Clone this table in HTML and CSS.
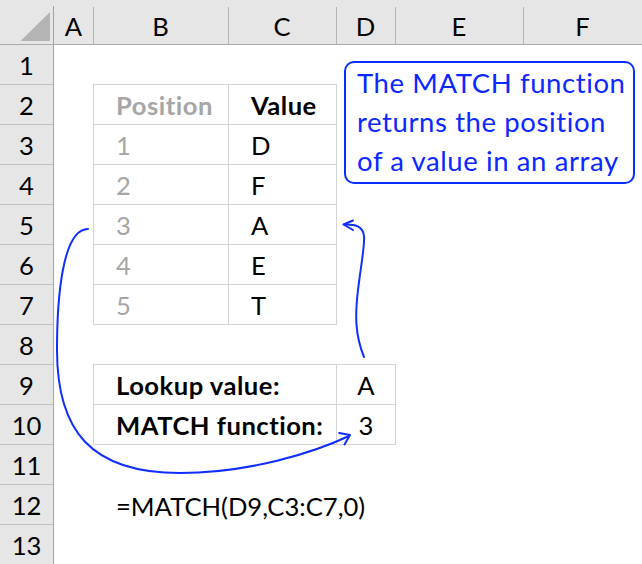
FILE: index.html
```html
<!DOCTYPE html>
<html>
<head>
<meta charset="utf-8">
<link rel="stylesheet" href="styles.css">
</head>
<body>
<div class="sheet">
  <div class="corner">
    <svg class="corner-tri" width="54" height="45" viewBox="0 0 54 45"><polygon points="20.5,41 50,41 50,12" fill="#b4b4b4"/></svg>
  </div>
  <div class="colheads">
    <div class="colhead">A</div>
    <div class="colhead">B</div>
    <div class="colhead">C</div>
    <div class="colhead">D</div>
    <div class="colhead">E</div>
    <div class="colhead">F</div>
  </div>
  <div class="rowheads">
    <div class="rowhead">1</div>
    <div class="rowhead">2</div>
    <div class="rowhead">3</div>
    <div class="rowhead">4</div>
    <div class="rowhead">5</div>
    <div class="rowhead">6</div>
    <div class="rowhead">7</div>
    <div class="rowhead">8</div>
    <div class="rowhead">9</div>
    <div class="rowhead">10</div>
    <div class="rowhead">11</div>
    <div class="rowhead">12</div>
    <div class="rowhead">13</div>
  </div>
  <div class="cells">
    <div class="tbl tbl-pos">
      <div class="cell muted bold">Position</div>
      <div class="cell bold">Value</div>
      <div class="cell muted">1</div>
      <div class="cell">D</div>
      <div class="cell muted">2</div>
      <div class="cell">F</div>
      <div class="cell muted">3</div>
      <div class="cell">A</div>
      <div class="cell muted">4</div>
      <div class="cell">E</div>
      <div class="cell muted">5</div>
      <div class="cell">T</div>
    </div>
    <div class="tbl tbl-lookup">
      <div class="cell bold">Lookup value:</div>
      <div class="cell center">A</div>
      <div class="cell bold">MATCH function:</div>
      <div class="cell center">3</div>
    </div>
    <div class="formula">=MATCH(D9,C3:C7,0)</div>
  </div>
</div>

<div class="callout">The MATCH function<br>returns the position<br>of a value in an array</div>

<svg class="arrows" width="642" height="564" viewBox="0 0 642 564">
  <g fill="none" stroke="#0f2eff" stroke-width="2" stroke-linecap="round" stroke-linejoin="round">
    <path d="M88,229 C62,229 57,300 57,350 C57,430 90,473 180,473 C250,473 315,452 349,436"/>
    <polyline points="339.2,433.1 350,435 344.5,444.5"/>
    <path d="M364,357 C355,335 355,315 358,290 C361,265 365,245 364,236 C363,226 355,224 344,224.5"/>
    <polyline points="353,220.5 343.5,224.5 353,230"/>
  </g>
</svg>
</body>
</html>
```

FILE: styles.css
```css
html, body {
  margin: 0;
  padding: 0;
  background: #ffffff;
  overflow: hidden;
}

body {
  width: 642px;
  height: 564px;
  position: relative;
  font-family: "Lato", "Carlito", "Open Sans", sans-serif;
  font-size: 25.6px;
  color: #000000;
}

.sheet {
  display: grid;
  grid-template-columns: 54px 1fr;
  grid-template-rows: 45px 1fr;
  width: 642px;
  height: 565px;
}

.corner {
  background: linear-gradient(#a3a3a3, #a3a3a3) right bottom / 1px 38px no-repeat, #e6e6e6;
  border-bottom: 1px solid #ababab;
  box-sizing: border-box;
  display: flex;
}

.colheads {
  display: grid;
  grid-template-columns: 39px 135px 108px 59px 128px 1fr;
  background: #e6e6e6;
  border-bottom: 1px solid #ababab;
  box-sizing: border-box;
}

.colhead {
  display: flex;
  align-items: flex-end;
  justify-content: center;
  line-height: 1.2;
  padding-bottom: 2.5px;
  background: linear-gradient(#b4b4b4, #b4b4b4) left bottom / 1px 37px no-repeat, #e6e6e6;
}

.colhead:first-child {
  background: #e6e6e6;
}

.rowheads {
  display: flex;
  flex-direction: column;
  background: #e6e6e6;
  border-right: 1px solid #a3a3a3;
  box-sizing: border-box;
}

.rowhead {
  height: 40px;
  flex: none;
  box-sizing: border-box;
  border-bottom: 1px solid #bfbfbf;
  display: flex;
  align-items: flex-end;
  justify-content: center;
  line-height: 1.2;
  padding-bottom: 3.5px;
}

.cells {
  display: grid;
  grid-template-columns: 39px 135px 108px 59px 128px 1fr;
  grid-template-rows: repeat(13, 40px);
}

.tbl {
  display: grid;
  gap: 1px;
  padding: 1px;
  background: #d4d4d4;
  grid-auto-rows: 39px;
  margin-top: -1px;
  align-self: start;
  justify-self: start;
}

.tbl-pos {
  grid-column: 2 / 4;
  grid-row: 2 / 8;
  grid-template-columns: 134px 107px;
}

.tbl-lookup {
  grid-column: 2 / 5;
  grid-row: 9 / 11;
  grid-template-columns: 242px 58px;
}

.cell {
  background: #ffffff;
  display: flex;
  align-items: flex-end;
  padding-left: 22px;
  padding-bottom: 3.5px;
  line-height: 1.2;
  box-sizing: border-box;
  white-space: nowrap;
}

.cell.center {
  justify-content: center;
  padding-left: 0;
}

.bold {
  font-weight: 700;
  letter-spacing: 0.5px;
}

.muted {
  color: #a6a6a6;
}

.formula {
  grid-column: 2 / 5;
  grid-row: 12;
  display: flex;
  align-items: flex-end;
  padding-left: 23px;
  padding-bottom: 3.5px;
  line-height: 1.2;
  white-space: nowrap;
}

.callout {
  position: absolute;
  left: 344px;
  top: 61px;
  width: 291px;
  height: 123px;
  box-sizing: border-box;
  border: 2px solid #0a2eff;
  border-radius: 10px;
  background: #ffffff;
  color: #0a28ff;
  font-size: 27.5px;
  letter-spacing: 0.6px;
  line-height: 39px;
  padding: 0 0 0 11px;
  white-space: nowrap;
}

.arrows {
  position: absolute;
  left: 0;
  top: 0;
  pointer-events: none;
}
```
